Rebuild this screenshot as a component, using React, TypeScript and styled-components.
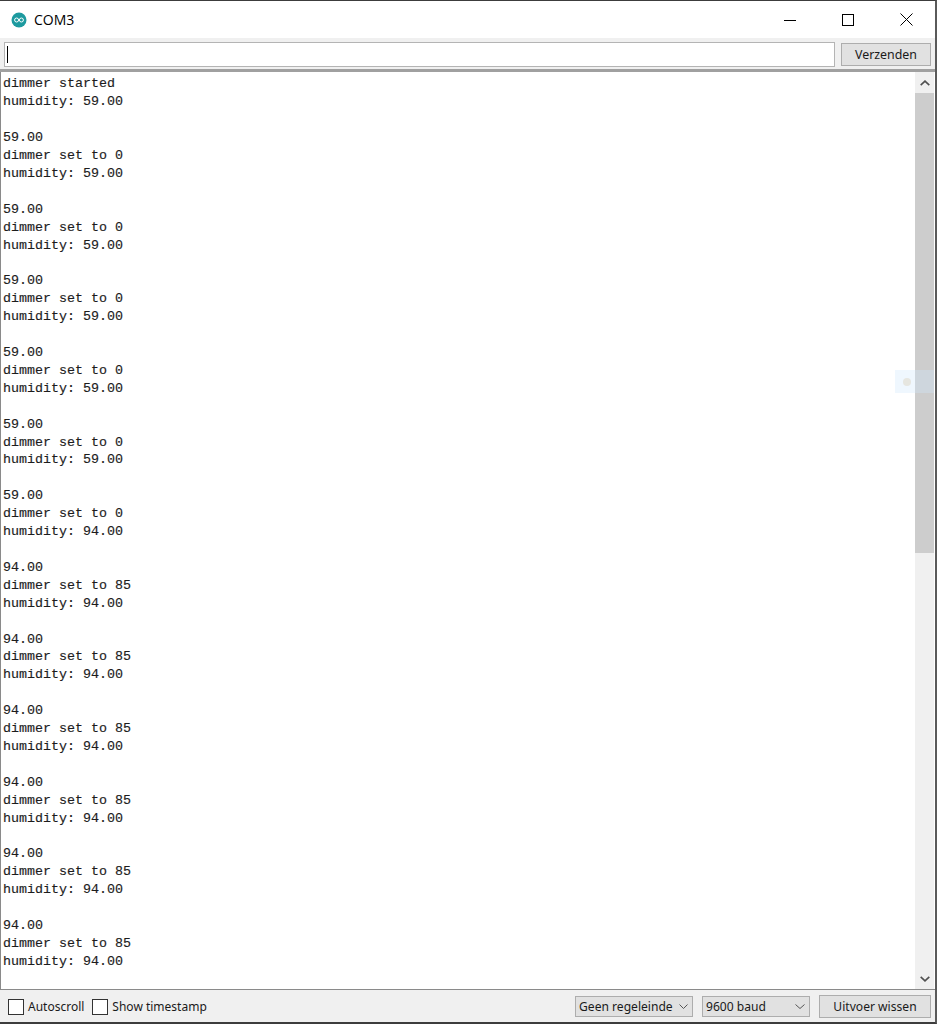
import React from "react";
import styled, { createGlobalStyle } from "styled-components";

const Global = createGlobalStyle`
  html, body { margin: 0; padding: 0; background: #fff; }
  body { font-family: "Liberation Sans", Arial, sans-serif; overflow: hidden; }
`;

const Frame = styled.div`
  width: 937px;
  height: 1024px;
  box-sizing: border-box;
  display: flex;
  flex-direction: column;
  overflow: hidden;
  background: #f0f0f0;
  border-top: 1px solid #3c3c3c;
  border-bottom: 2px solid #3c3c3c;
  border-right: 2px solid #5a5a5a;
`;

const TitleBar = styled.header`
  height: 37px;
  flex: none;
  display: flex;
  align-items: center;
  background: #fff;
  padding-left: 11px;
`;

const Title = styled.span`
  font-family: "Open Sans", "Liberation Sans", sans-serif;
  font-size: 14px;
  color: #000;
  margin-left: 7px;
  flex: 1;
`;

const WindowButton = styled.button`
  width: 58px;
  height: 37px;
  padding: 0;
  border: 0;
  background: transparent;
  display: flex;
  align-items: center;
  justify-content: center;
`;

const SendBar = styled.div`
  height: 34px;
  flex: none;
  display: flex;
  align-items: center;
  gap: 6px;
  padding: 4px 4px 2px;
  border-bottom: 3px solid #a0a0a0;
  box-sizing: border-box;
`;

const InputBox = styled.div`
  flex: 1;
  height: 25px;
  box-sizing: border-box;
  background: #fff;
  border: 1px solid #b4b4b4;
  display: flex;
  align-items: center;
  padding-left: 2px;
`;

const Caret = styled.i`
  display: block;
  width: 1px;
  height: 17px;
  background: #000;
`;

const PushButton = styled.button<{ $w: number; $size: number }>`
  width: ${(p) => p.$w}px;
  height: 23px;
  box-sizing: border-box;
  padding: 0;
  background: #e1e1e1;
  border: 1px solid #adadad;
  font-family: "Noto Sans", "Liberation Sans", sans-serif;
  font-size: ${(p) => p.$size}px;
  color: #1a1a1a;
`;

const Middle = styled.div`
  flex: 1;
  min-height: 0;
  display: flex;
  background: #fff;
  border-left: 1px solid #8a8a8a;
  border-bottom: 1px solid #8a8a8a;
`;

const Output = styled.pre`
  flex: 1;
  margin: 0;
  padding: 3.45px 0 0 2px;
  font-family: "Liberation Mono", "Courier New", monospace;
  font-size: 13.33px;
  line-height: 17.9px;
  color: #1c1c1c;
  -webkit-text-stroke: 0.15px #1c1c1c;
  overflow: hidden;
`;

const Scrollbar = styled.div`
  width: 19px;
  flex: none;
  margin-right: 1px;
  display: flex;
  flex-direction: column;
  background: #f0f0f0;
`;

const ScrollArrow = styled.div`
  height: 21px;
  flex: none;
  display: flex;
  align-items: center;
  justify-content: center;
`;

const ScrollTrack = styled.div`
  flex: 1;
  position: relative;
`;

const ScrollThumb = styled.div`
  height: 460px;
  background: #cdcdcd;
`;

const Ghost = styled.div`
  position: absolute;
  left: -20px;
  top: 277px;
  width: 39px;
  height: 23px;
  background: rgba(210, 232, 252, 0.35);
  display: flex;
  align-items: center;
  padding-left: 8px;
  box-sizing: border-box;
`;

const GhostDot = styled.i`
  display: block;
  width: 8px;
  height: 8px;
  border-radius: 50%;
  background: #e6e6e0;
`;

const BottomBar = styled.footer`
  height: 32px;
  flex: none;
  display: flex;
  align-items: center;
  padding: 1px 4px 0 8px;
  box-sizing: border-box;
`;

const CheckLabel = styled.label`
  display: flex;
  align-items: center;
  font-family: "Noto Sans", "Liberation Sans", sans-serif;
  font-size: 12px;
  color: #1a1a1a;
  margin-right: 8px;
`;

const CheckBox = styled.span`
  width: 16px;
  height: 16px;
  box-sizing: border-box;
  background: #fff;
  border: 1px solid #333;
  margin-right: 4px;
`;

const Spacer = styled.div`
  flex: 1;
`;

const Select = styled.div<{ $w: number; $mr: number }>`
  width: ${(p) => p.$w}px;
  height: 21px;
  margin-right: ${(p) => p.$mr}px;
  box-sizing: border-box;
  background: #e1e1e1;
  border: 1px solid #adadad;
  display: flex;
  align-items: center;
  justify-content: space-between;
  padding: 0 4px 0 3px;
  font-family: "Noto Sans", "Liberation Sans", sans-serif;
  font-size: 12.1px;
  color: #1a1a1a;
`;

const block = (last: string, a: string, dim: string) => `\n${a}\ndimmer set to ${dim}\nhumidity: ${last}\n`;
let text = "dimmer started\nhumidity: 59.00\n";
for (let i = 0; i < 5; i++) text += block("59.00", "59.00", "0");
text += block("94.00", "59.00", "0");
for (let i = 0; i < 6; i++) text += block("94.00", "94.00", "85");

const Chevron = ({ w }: { w: number }) => (
  <svg width={w} height="5" viewBox={`0 0 ${w} 5`} fill="none" stroke="#555" strokeWidth="1">
    <path d={`M.5.5L${w / 2} 4.5L${w - 0.5} .5`} />
  </svg>
);

export default function App() {
  return (
    <>
      <Global />
      <Frame>
        <TitleBar>
          <svg width="16" height="16" viewBox="0 0 16 16">
            <circle cx="8" cy="8" r="7.5" fill="#1d9a9f" />
            <circle cx="5.6" cy="8" r="2" fill="none" stroke="#fff" strokeWidth="1" />
            <circle cx="10.4" cy="8" r="2" fill="none" stroke="#fff" strokeWidth="1" />
          </svg>
          <Title>COM3</Title>
          <WindowButton aria-label="minimize">
            <svg width="12" height="12" viewBox="0 0 12 12"><path d="M0 6.5h12" stroke="#000" strokeWidth="1" /></svg>
          </WindowButton>
          <WindowButton aria-label="maximize">
            <svg width="12" height="12" viewBox="0 0 12 12"><rect x=".5" y=".5" width="11" height="11" fill="none" stroke="#000" /></svg>
          </WindowButton>
          <WindowButton aria-label="close">
            <svg width="13" height="13" viewBox="0 0 13 13"><path d="M.5.5l12 12M12.5.5l-12 12" stroke="#000" strokeWidth="1" /></svg>
          </WindowButton>
        </TitleBar>
        <SendBar>
          <InputBox><Caret /></InputBox>
          <PushButton $w={90} $size={12.4}>Verzenden</PushButton>
        </SendBar>
        <Middle>
          <Output>{text}</Output>
          <Scrollbar>
            <ScrollArrow>
              <svg width="10" height="6" viewBox="0 0 10 6" fill="none" stroke="#505050" strokeWidth="1.6"><path d="M.7 5.2L5 1.1l4.3 4.1" /></svg>
            </ScrollArrow>
            <ScrollTrack>
              <ScrollThumb />
              <Ghost><GhostDot /></Ghost>
            </ScrollTrack>
            <ScrollArrow>
              <svg width="10" height="6" viewBox="0 0 10 6" fill="none" stroke="#505050" strokeWidth="1.6"><path d="M.7.8L5 4.9 9.3.8" /></svg>
            </ScrollArrow>
          </Scrollbar>
        </Middle>
        <BottomBar>
          <CheckLabel><CheckBox />Autoscroll</CheckLabel>
          <CheckLabel><CheckBox />Show timestamp</CheckLabel>
          <Spacer />
          <Select $w={118} $mr={9}>Geen regeleinde<Chevron w={9} /></Select>
          <Select $w={108} $mr={9}>9600 baud<Chevron w={10} /></Select>
          <PushButton $w={112} $size={12.1}>Uitvoer wissen</PushButton>
        </BottomBar>
      </Frame>
    </>
  );
}
